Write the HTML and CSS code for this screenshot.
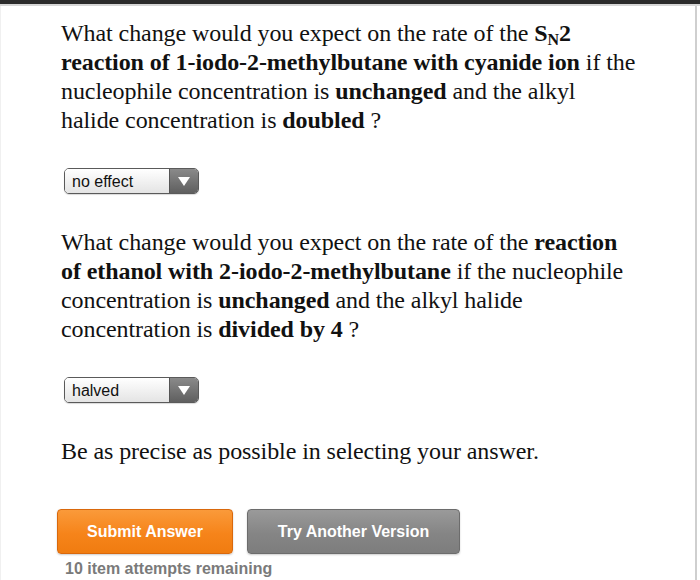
FILE: index.html
```html
<!DOCTYPE html>
<html lang="en">
<head>
    <meta charset="UTF-8">
    <meta name="viewport" content="width=device-width, initial-scale=1.0">
    <title>Question</title>
    <link rel="stylesheet" href="styles.css">
</head>
<body>

    <div class="top-bar"></div>

    <div class="question-frame">
        <p class="question">
            What change would you expect on the rate of the <b>S<sub>N</sub>2 reaction of 1-iodo-2-methylbutane with cyanide ion</b> if the nucleophile concentration is <b>unchanged</b> and the alkyl halide concentration is <b>doubled</b> ?
        </p>

        <!-- Answer dropdown -->
        <div class="answer-select">
            <span class="select-value">no effect</span>
            <span class="select-arrow"></span>
        </div>

        <p class="question">
            What change would you expect on the rate of the <b>reaction of ethanol with 2-iodo-2-methylbutane</b> if the nucleophile concentration is <b>unchanged</b> and the alkyl halide concentration is <b>divided by 4</b> ?
        </p>

        <div class="answer-select">
            <span class="select-value">halved</span>
            <span class="select-arrow"></span>
        </div>

        <p class="question">Be as precise as possible in selecting your answer.</p>

        <div class="button-row">
            <button class="btn btn-submit">Submit Answer</button>
            <button class="btn btn-retry">Try Another Version</button>
        </div>
        <div class="attempts">10 item attempts remaining</div>
    </div>

</body>
</html>
```

FILE: styles.css
```css
body {
    margin: 0;
    padding: 0;
    background-color: #ffffff;
    color: #111;
}

.top-bar {
    height: 4px;
    background-color: #2b2b2b;
    border-bottom: 2px solid #d6d6d6;
}

.question-frame {
    height: 574px;
    box-sizing: border-box;
    margin-right: 3px;
    border-right: 2px solid #cfcfcf;
    border-left: 1px solid #f0f0f0;
    padding: 13px 0 0 60px;
    overflow: hidden;
}

.question {
    font-family: 'Liberation Serif', 'Times New Roman', serif;
    font-size: 24px;
    letter-spacing: -0.08px;
    line-height: 29px;
    max-width: 577px;
    margin: 0 0 33px 0;
}

.question b sub {
    font-size: 16px;
    line-height: 0;
    vertical-align: -4px;
}

.answer-select {
    display: flex;
    width: 135px;
    height: 26px;
    box-sizing: border-box;
    margin: 0 0 34px 3px;
    border: 1px solid #5a5a5a;
    border-radius: 5px;
    overflow: hidden;
    font-family: 'Liberation Sans', Arial, sans-serif;
    font-size: 16px;
    box-shadow: 0 1px 1px rgba(0, 0, 0, 0.15);
}

.select-value {
    flex: 1;
    padding-left: 7px;
    line-height: 25px;
    color: #111;
    background: linear-gradient(#ffffff, #e4e4e4);
}

.select-arrow {
    width: 28px;
    background: linear-gradient(#8a8a8a, #5f5f5f);
    border-left: 1px solid #555;
    display: flex;
    align-items: center;
    justify-content: center;
}

.select-arrow::after {
    content: "";
    border-left: 6px solid transparent;
    border-right: 6px solid transparent;
    border-top: 9px solid #ffffff;
}

.button-row {
    display: flex;
    gap: 14px;
    margin: 43px 0 0 -4px;
}

.btn {
    height: 45px;
    border-radius: 4px;
    font-family: 'Liberation Sans', Arial, sans-serif;
    font-size: 16px;
    font-weight: bold;
    color: #ffffff;
    padding: 0;
    cursor: pointer;
    box-shadow: 0 1px 2px rgba(0, 0, 0, 0.2);
}

.btn-submit {
    width: 176px;
    background: linear-gradient(#fa9a3a, #f6841a 55%, #f07c10);
    border: 1px solid #d9680c;
}

.btn-retry {
    width: 213px;
    background: linear-gradient(#9a9a9a, #858585 55%, #7d7d7d);
    border: 1px solid #6c6c6c;
}

.attempts {
    margin: 6px 0 0 4px;
    font-family: 'Liberation Sans', Arial, sans-serif;
    font-size: 16px;
    font-weight: bold;
    color: #7a7a7a;
}
```
